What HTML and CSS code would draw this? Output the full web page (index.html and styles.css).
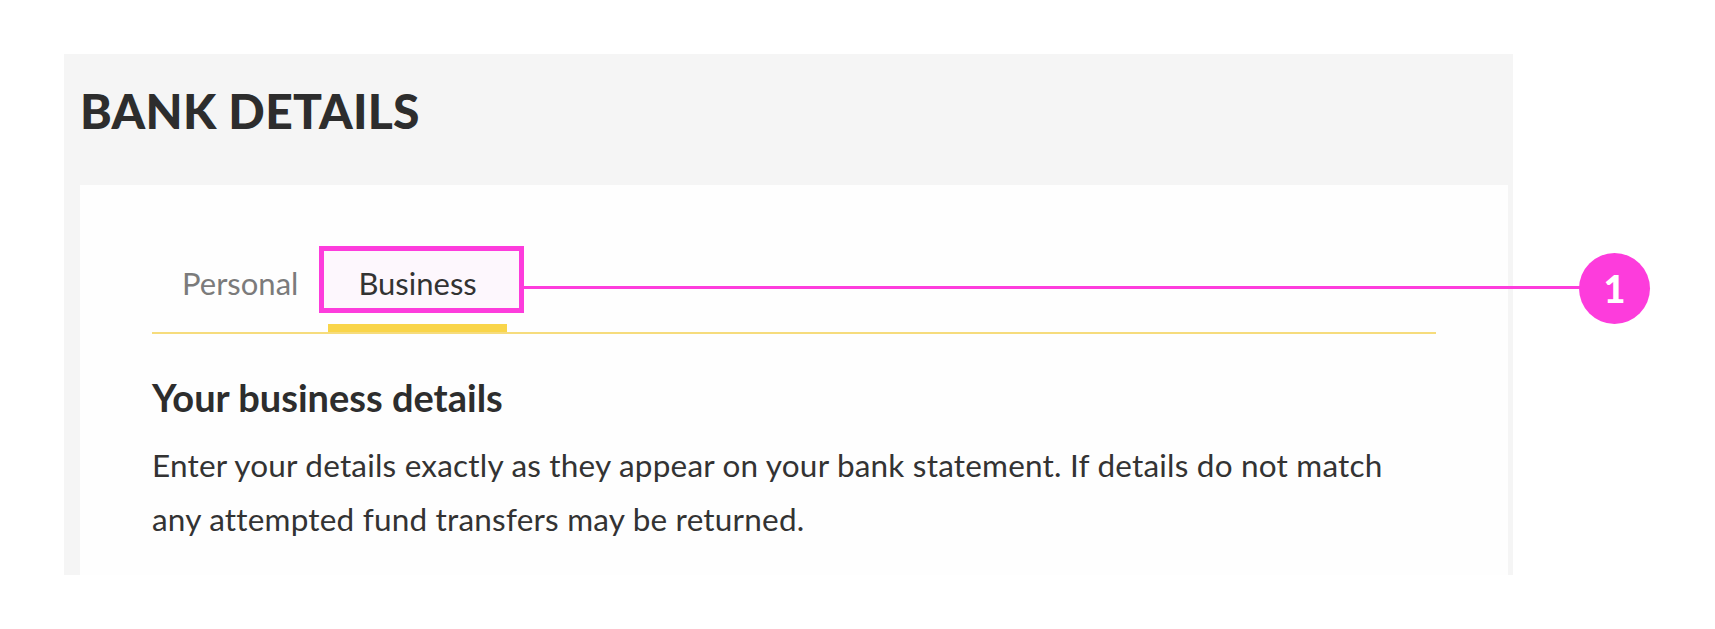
FILE: index.html
```html
<!DOCTYPE html>
<html lang="en">
<head>
<meta charset="utf-8">
<title>Bank details</title>
<link rel="stylesheet" href="styles.css">
</head>
<body>
<section class="panel">
  <h1 class="panel-title">BANK DETAILS</h1>
  <div class="card">
    <div class="tabs">
      <div class="tab">Personal</div>
      <div class="tab tab-active"><span class="highlight"></span><span class="tab-label">Business</span></div>
    </div>
    <h2 class="section-title">Your business details</h2>
    <p class="section-text">Enter your details exactly as they appear on your bank statement. If details do not match any attempted fund transfers may be returned.</p>
  </div>
</section>
<div class="callout-line"></div>
<div class="callout-badge">1</div>
</body>
</html>
```

FILE: styles.css
```css
html, body {
  margin: 0;
  padding: 0;
  background: #ffffff;
}

body {
  padding: 54px 0 0 64px;
  font-family: "Lato", "Liberation Sans", sans-serif;
  color: #2f2f2f;
  position: relative;
  height: 629px;
  box-sizing: border-box;
  overflow: hidden;
}

.panel {
  width: 1449px;
  height: 521px;
  box-sizing: border-box;
  background: #f5f5f5;
  padding: 0 5px 0 16px;
  display: flex;
  flex-direction: column;
}

.panel-title {
  margin: 0;
  height: 131px;
  box-sizing: border-box;
  padding-top: 28px;
  padding-left: 0;
  font-size: 48px;
  line-height: 58px;
  font-weight: 900;
  color: #2d2d2d;
  letter-spacing: 0.3px;
}

.card {
  flex: 1;
  background: #fefefe;
  padding: 78px 72px 0;
}

.tabs {
  display: flex;
  border-bottom: 2px solid #f6dc7c;
}

.tab {
  position: relative;
  padding: 0 30px 21px;
  border-bottom: 8px solid transparent;
  font-size: 31px;
  line-height: 40px;
  color: #7b7b7b;
}

.tab-active {
  color: #333333;
  border-bottom-color: #f9d54a;
}

.tab-label {
  position: relative;
}

.highlight {
  position: absolute;
  left: -9px;
  right: -17px;
  top: -17px;
  bottom: 11px;
  border: 5px solid #fd3cdc;
  background: #fdf7fd;
}

.section-title {
  margin: 40px 0 0;
  font-size: 38px;
  line-height: 46px;
  font-weight: 700;
  color: #2d2d2d;
}

.section-text {
  margin: 18px 0 0;
  max-width: 1252px;
  font-size: 31.5px;
  line-height: 54px;
  letter-spacing: 0.2px;
  color: #333333;
}

.callout-line {
  position: absolute;
  left: 522px;
  top: 286px;
  width: 1060px;
  height: 3px;
  background: #fd3cdc;
}

.callout-badge {
  position: absolute;
  left: 1579px;
  top: 253px;
  width: 71px;
  height: 71px;
  border-radius: 50%;
  background: #fd3cdc;
  color: #ffffff;
  font-size: 38px;
  font-weight: 900;
  line-height: 71px;
  text-align: center;
}
```
